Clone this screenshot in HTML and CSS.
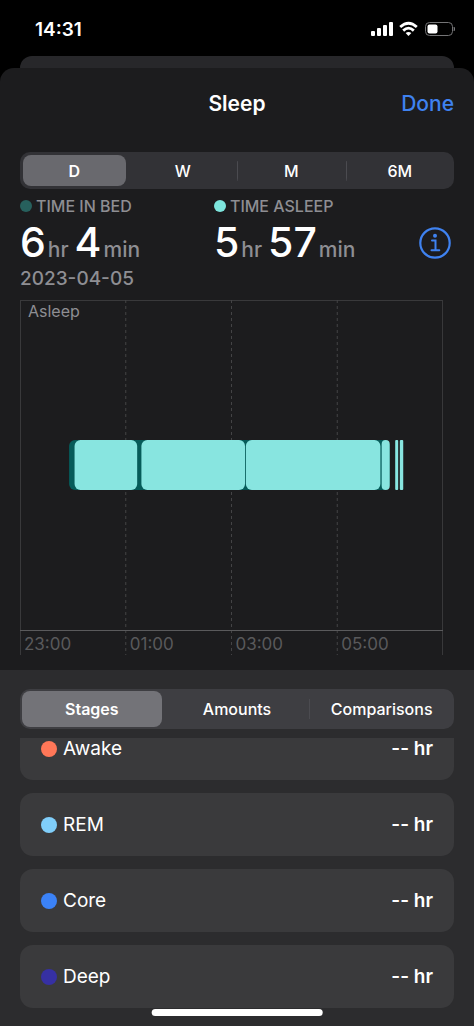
FILE: index.html
```
<!DOCTYPE html>
<html lang="en">
<head>
<meta charset="utf-8">
<meta name="viewport" content="width=device-width, initial-scale=1">
<title>Sleep</title>
<link rel="stylesheet" href="styles.css">
</head>
<body>
<div class="screen">
  <div class="status">
    <time class="clock">14:31</time>
    <svg class="status-icons" width="84" height="16" viewBox="0 0 84 16" aria-hidden="true">
      <g fill="#fff">
        <rect x="0" y="10" width="4" height="5" rx="1"/>
        <rect x="6" y="7" width="4" height="8" rx="1"/>
        <rect x="12" y="4" width="4" height="11" rx="1"/>
        <rect x="18" y="1" width="4" height="14" rx="1"/>
        <path d="M37.500 15 L34.600 12.100 Q37.500 9.800 40.400 12.100 Z"/>
      </g>
      <g fill="none" stroke="#fff" stroke-width="2.800">
        <path d="M29.200 6 Q37.500 -1.600 45.800 6"/>
        <path d="M32.200 9.600 Q37.500 4.700 42.800 9.600"/>
      </g>
      <rect x="54.500" y="1.500" width="27" height="13" rx="4" fill="none" stroke="#747476"/>
      <rect x="56.500" y="3.500" width="10" height="9" rx="2" fill="#fff"/>
      <path d="M83 6 Q84.500 8 83 10 Z" fill="#8a8a8c" stroke="#8a8a8c" stroke-width=".5"/>
    </svg>
  </div>
  <div class="back-sheet"></div>
  <main class="sheet">
    <header class="header">
      <h1 class="title">Sleep</h1>
      <button class="done" type="button">Done</button>
    </header>

    <div class="segments ranges" role="group" aria-label="Range">
      <button class="segment selected" type="button" aria-pressed="true">D</button>
      <button class="segment" type="button">W</button>
      <button class="segment divided" type="button">M</button>
      <button class="segment divided" type="button">6M</button>
    </div>

    <section class="summary">
      <div>
        <div class="legend"><span class="dot bed"></span>TIME IN BED</div>
        <div class="value"><b>6</b><span class="unit">hr</span><b class="next">4</b><span class="unit">min</span></div>
        <div class="date">2023-04-05</div>
      </div>
      <div>
        <div class="legend"><span class="dot asleep"></span>TIME ASLEEP</div>
        <div class="value"><b>5</b><span class="unit">hr</span><b class="next">57</b><span class="unit">min</span></div>
      </div>
      <button class="info" type="button" aria-label="About sleep">
        <svg width="32" height="32" viewBox="0 0 32 32" fill="none" stroke="#3f82f0" stroke-width="2.200" aria-hidden="true">
          <circle cx="16" cy="16" r="14.700"/>
          <circle cx="16" cy="8.700" r="2" fill="#3f82f0" stroke="none"/>
          <path d="M13 13.500 H16.500 V23 M12.500 23.200 H20.300" stroke-linecap="round" stroke-width="2"/>
        </svg>
      </button>
    </section>

    <section class="chart">
      <svg class="plot" aria-hidden="true">
        <g stroke="#39393b">
          <line x1="0.120%" y1="0" x2="0.120%" y2="100%"/>
          <line x1="99.880%" y1="0" x2="99.880%" y2="100%"/>
          <line x1="0" y1="0.500" x2="100%" y2="0.500"/>
        </g>
        <g stroke="#434345" stroke-dasharray="3 3">
          <line x1="25%" y1="0" x2="25%" y2="100%"/>
          <line x1="50%" y1="0" x2="50%" y2="100%"/>
          <line x1="75%" y1="0" x2="75%" y2="100%"/>
        </g>
        <line x1="0" y1="330.500" x2="100%" y2="330.500" stroke="#5a5a5c"/>
        <rect x="11.600%" y="140" width="75.800%" height="50" rx="6" fill="#065b59"/>
        <g fill="#88e5e0">
          <rect x="12.900%" y="140" width="14.800%" height="50" rx="6"/>
          <rect x="28.700%" y="140" width="24.500%" height="50" rx="6"/>
          <rect x="53.400%" y="140" width="31.800%" height="50" rx="6"/>
          <rect x="85.500%" y="140" width="1.900%" height="50" rx="4"/>
          <rect x="88.700%" y="140" width="0.700%" height="50" rx="1"/>
          <rect x="89.800%" y="140" width="0.800%" height="50" rx="1"/>
        </g>
      </svg>
      <div class="series">Asleep</div>
      <div class="hours"><span>23:00</span><span>01:00</span><span>03:00</span><span>05:00</span></div>
    </section>

    <section class="details">
      <div class="segments tabs" role="group" aria-label="Details">
        <button class="segment selected" type="button" aria-pressed="true">Stages</button>
        <button class="segment" type="button">Amounts</button>
        <button class="segment divided" type="button">Comparisons</button>
      </div>
      <div class="scroller">
        <ul class="stages">
          <li class="stage"><span class="dot awake"></span>Awake<span class="amount">-- hr</span></li>
          <li class="stage"><span class="dot rem"></span>REM<span class="amount">-- hr</span></li>
          <li class="stage"><span class="dot core"></span>Core<span class="amount">-- hr</span></li>
          <li class="stage"><span class="dot deep"></span>Deep<span class="amount">-- hr</span></li>
        </ul>
      </div>
    </section>
  </main>
  <div class="home-indicator"></div>
</div>
</body>
</html>
```
FILE: styles.css
```
* { box-sizing: border-box; }
body {
  margin: 0;
  background: #000;
  color: #fff;
  font-family: Inter, "Liberation Sans", sans-serif;
}
button {
  padding: 0;
  border: 0;
  background: none;
  color: inherit;
  font: inherit;
}
.screen {
  position: relative;
  display: flex;
  flex-direction: column;
  min-height: 100vh;
}
.status {
  display: flex;
  align-items: center;
  justify-content: space-between;
  height: 56px;
  padding: 2px 19px 0 35px;
}
.clock { font-size: 19px; font-weight: 600; }
.back-sheet {
  height: 12px;
  margin: 0 20px;
  border-radius: 12px 12px 0 0;
  background: #27272a;
}
.sheet {
  flex: 1;
  display: flex;
  flex-direction: column;
  border-radius: 14px 14px 0 0;
  background: #1c1c1e;
}
.header {
  display: grid;
  grid-template-columns: 1fr auto 1fr;
  align-items: center;
  height: 71px;
  padding: 0 20px;
}
.title {
  grid-column: 2;
  margin: 0;
  font-size: 21px;
  font-weight: 600;
}
.done {
  justify-self: end;
  color: #3f82f0;
  font-size: 21px;
  font-weight: 500;
}
.segments {
  display: grid;
  grid-auto-flow: column;
  grid-auto-columns: 1fr;
  margin: 0 20px;
  border-radius: 10px;
}
.ranges {
  height: 37px;
  margin-top: 13px;
  padding: 3px 0;
  background: #323236;
  font-size: 16px;
}
.segment { font-weight: 500; border-radius: 8px; }
.selected { background: #69696e; font-weight: 600; }
.divided {
  background: linear-gradient(#4b4b50, #4b4b50) left center / 1px 20px no-repeat;
}
.ranges .selected { margin: 0 3px; }
.summary {
  display: grid;
  grid-template-columns: 45% 1fr auto;
  margin: 6px 23px 0 20px;
}
.legend {
  display: flex;
  align-items: center;
  gap: 4px;
  height: 22px;
  color: #8e8e93;
  font-size: 16px;
  font-weight: 500;
}
.dot {
  flex: none;
  width: 12px;
  height: 12px;
  border-radius: 50%;
}
.value {
  display: flex;
  align-items: baseline;
  height: 51px;
  line-height: 50px;
}
.value b { font-size: 41px; font-weight: 500; }
.value .next { margin-left: 6px; }
.unit {
  margin-left: 2px;
  color: #8e8e93;
  font-size: 21px;
  font-weight: 500;
}
.date {
  height: 22px;
  color: #8e8e93;
  font-size: 19px;
  font-weight: 500;
  line-height: 22px;
}
.info { align-self: center; height: 32px; }
.chart {
  display: flex;
  flex-direction: column;
  justify-content: space-between;
  position: relative;
  height: 355px;
  margin: 10px 31px 15px 20px;
}
.plot {
  position: absolute;
  inset: 0;
  width: 100%;
  height: 100%;
}
.series {
  padding-left: 8px;
  color: #8e8e93;
  font-size: 16px;
  line-height: 23px;
}
.hours {
  display: grid;
  grid-template-columns: repeat(4, 1fr);
  color: #59595b;
  font-size: 17px;
  line-height: 22px;
}
.hours span { padding-left: 4px; }
.details {
  flex: 1;
  padding-top: 19px;
  background: #2c2c2e;
}
.tabs {
  height: 40px;
  padding: 2px 0;
  background: #3e3e42;
  font-size: 16px;
}
.tabs .selected { background: #737378; margin: 0 3px 0 2px; }
.scroller {
  margin: 9px 20px 0;
  overflow: hidden;
}
.stages {
  display: flex;
  flex-direction: column;
  gap: 13px;
  margin: -21px 0 0;
  padding: 0 0 18px;
  list-style: none;
}
.stage {
  display: flex;
  align-items: center;
  gap: 6px;
  height: 63px;
  padding: 0 21px;
  border-radius: 13px;
  background: #3a3a3c;
  font-size: 19px;
}
.stage .dot { width: 16px; height: 16px; }
.amount { margin-left: auto; font-weight: 600; }
.bed { background: #27605d; }
.asleep { background: #7de5dd; }
.awake { background: #ff7758; }
.rem { background: #80cefa; }
.core { background: #3b82f7; }
.deep { background: #3630a3; }
.home-indicator {
  position: absolute;
  bottom: 10px;
  left: 50%;
  width: 36%;
  height: 7px;
  border-radius: 4px;
  background: #fff;
  transform: translateX(-50%);
}
```
